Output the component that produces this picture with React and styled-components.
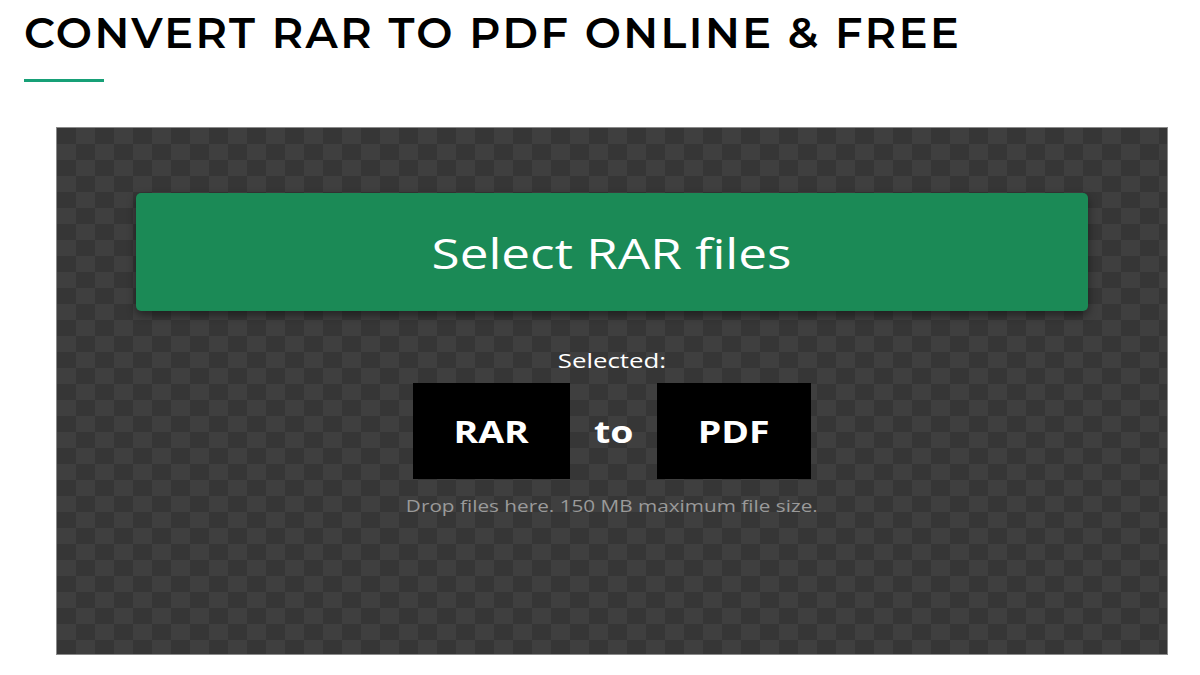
import React from "react";
import styled, { createGlobalStyle } from "styled-components";

const Global = createGlobalStyle`
  body {
    margin: 0;
    background: #fff;
    font-family: "Open Sans", "Liberation Sans", sans-serif;
  }
`;

const Page = styled.div`
  width: 1200px;
  height: 675px;
  overflow: hidden;
  padding: 8px 0 0 24px;
  box-sizing: border-box;
`;

const Title = styled.h1`
  margin: 0;
  font-family: "Montserrat", "Liberation Sans", sans-serif;
  font-weight: 600;
  font-size: 43px;
  line-height: 50px;
  letter-spacing: 2.45px;
  color: #000;
  white-space: nowrap;
`;

const Underline = styled.div`
  width: 80px;
  height: 3px;
  background: #17a077;
  margin-top: 21px;
`;

const Dropzone = styled.div`
  margin: 45px 0 0 32px;
  width: 1112px;
  height: 528px;
  box-sizing: border-box;
  border: 1px solid #8a8a8a;
  background-color: #3a3a3a;
  background-image: conic-gradient(
    #3f3f3f 25%,
    #363636 0 50%,
    #3f3f3f 0 75%,
    #363636 0
  );
  background-size: 38px 32px;
  display: flex;
  flex-direction: column;
  align-items: center;
  padding-top: 65px;
`;

// the page's Open Sans renders wider than ours, so stretch the glyphs
const Wide = styled.span`
  display: inline-block;
  transform: scaleX(${(p) => p.$x || 1.2});
`;

const SelectButton = styled.button`
  width: 952px;
  height: 118px;
  border: none;
  border-radius: 5px;
  background: #1b8a56;
  color: #fff;
  font-family: "Open Sans", sans-serif;
  font-size: 42px;
  box-shadow: 0 4px 10px rgba(0, 0, 0, 0.45);
  cursor: pointer;
`;

const SelectedLabel = styled.div`
  margin-top: 36px;
  color: #fff;
  font-size: 20px;
  line-height: 28px;
`;

const Formats = styled.div`
  display: flex;
  align-items: center;
  gap: 24px;
  margin-top: 8px;
`;

const FormatBox = styled.div`
  width: ${(p) => p.$w}px;
  height: 96px;
  background: #000;
  color: #fff;
  font-weight: 700;
  font-size: 30px;
  display: flex;
  align-items: center;
  justify-content: center;
`;

const To = styled.span`
  width: 39px;
  text-align: center;
  color: #fff;
  font-weight: 700;
  font-size: 30px;
`;

const Hint = styled.div`
  margin-top: 15px;
  color: #9a9a9a;
  font-size: 17px;
`;

export default function App() {
  return (
    <>
      <Global />
      <Page>
        <Title>CONVERT RAR TO PDF ONLINE &amp; FREE</Title>
        <Underline />
        <Dropzone>
          <SelectButton>
            <Wide $x={1.22}>Select RAR files</Wide>
          </SelectButton>
          <SelectedLabel>
            <Wide $x={1.29}>Selected:</Wide>
          </SelectedLabel>
          <Formats>
            <FormatBox $w={157}>
              <Wide $x={1.25}>RAR</Wide>
            </FormatBox>
            <To>
              <Wide $x={1.25}>to</Wide>
            </To>
            <FormatBox $w={154}>
              <Wide $x={1.25}>PDF</Wide>
            </FormatBox>
          </Formats>
          <Hint>
            <Wide $x={1.22}>Drop files here. 150 MB maximum file size.</Wide>
          </Hint>
        </Dropzone>
      </Page>
    </>
  );
}
